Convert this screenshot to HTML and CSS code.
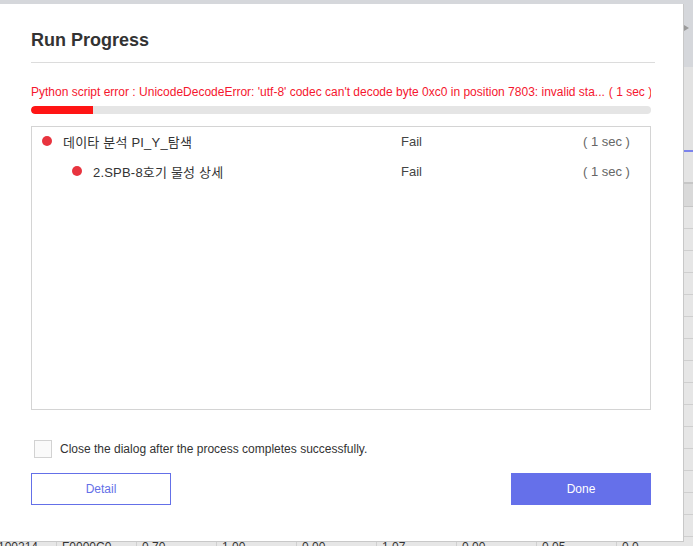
FILE: index.html
```html
<!DOCTYPE html>
<html>
<head>
<meta charset="utf-8">
<link rel="stylesheet" href="styles.css">
</head>
<body>
<div class="page">
  <div class="topbar"><span class="arrow"></span></div>
  <div class="tabbar"></div>
  <div class="gap"></div>
  <div class="thead"></div>
  <div class="tbody">
    <div class="trow"></div><div class="trow"></div><div class="trow"></div><div class="trow"></div>
    <div class="trow"></div><div class="trow"></div><div class="trow"></div><div class="trow"></div>
    <div class="trow"></div><div class="trow"></div><div class="trow"></div><div class="trow"></div>
    <div class="trow"></div><div class="trow"></div><div class="trow"></div>
    <div class="trow data">
      <span class="cell first">100214</span>
      <span class="cell">F0000C0</span>
      <span class="cell">0.70</span>
      <span class="cell">1.00</span>
      <span class="cell">0.00</span>
      <span class="cell">1.07</span>
      <span class="cell">0.00</span>
      <span class="cell">0.05</span>
      <span class="cell">0.0</span>
    </div>
  </div>
</div>

<div class="dialog">
  <h1 class="title">Run Progress</h1>
  <div class="divider"></div>
  <div class="error">Python script error : UnicodeDecodeError: 'utf-8' codec can't decode byte 0xc0 in position 7803: invalid sta...<span class="err-time">( 1 sec )</span></div>
  <div class="progress"><div class="progress-fill"></div></div>
  <div class="list">
    <div class="item">
      <div class="name"><span class="dot"></span>데이타 분석 PI_Y_탐색</div>
      <div class="status">Fail</div>
      <div class="time">( 1 sec )</div>
    </div>
    <div class="item child">
      <div class="name"><span class="dot"></span>2.SPB-8호기 물성 상세</div>
      <div class="status">Fail</div>
      <div class="time">( 1 sec )</div>
    </div>
  </div>
  <label class="check-row"><span class="checkbox"></span><span class="check-label">Close the dialog after the process completes successfully.</span></label>
  <div class="buttons">
    <button class="btn btn-outline">Detail</button>
    <button class="btn btn-primary">Done</button>
  </div>
</div>
</body>
</html>
```
FILE: styles.css
```css
* { box-sizing: border-box; }
html, body { margin: 0; padding: 0; }
body {
  width: 693px;
  height: 546px;
  overflow: hidden;
  position: relative;
  background: #e4e4e4;
  font-family: "Liberation Sans", Arial, "Noto Sans CJK KR", sans-serif;
}

/* background page */
.page { display: flex; flex-direction: column; }
.topbar {
  height: 67px;
  background: #d5d7db;
  position: relative;
}
.arrow {
  position: absolute;
  left: 684px;
  top: 25px;
  width: 0; height: 0;
  border-top: 3px solid transparent;
  border-bottom: 3px solid transparent;
  border-left: 5px solid #9a9a9a;
}
.tabbar {
  height: 85px;
  background: #e2e2e2;
  border-bottom: 2px solid #7b83ec;
}
.gap { height: 30px; background: #e4e4e4; }
.thead {
  height: 25px;
  background: #d9d9d9;
  border-top: 2px solid #c6c6c6;
  border-bottom: 1px solid #c6c6c6;
}
.tbody { display: flex; flex-direction: column; }
.trow {
  height: 22px;
  border-bottom: 1px solid #cfcfcf;
  background: #e6e6e6;
  display: flex;
}
.trow.data { border-top: 1px solid #cfcfcf; height: 23px; margin-top: -1px; }
.cell {
  width: 80px;
  flex: none;
  padding-left: 5px;
  font-size: 12px;
  line-height: 21px;
  color: #333;
  border-right: 1px solid #cfcfcf;
  white-space: nowrap;
  overflow: hidden;
}
.cell.first { width: 57px; padding-left: 0; text-indent: -2px; }

/* dialog */
.dialog {
  position: absolute;
  left: 0;
  top: 4px;
  width: 684px;
  height: 538px;
  background: #fff;
  border-right: 1px solid #c8c8c8;
  border-bottom: 1px solid #c8c8c8;
  padding: 24px 0 0 31px;
  display: flex;
  flex-direction: column;
}
.title {
  margin: 0;
  font-size: 18px;
  line-height: 24px;
  font-weight: bold;
  color: #333;
}
.divider {
  height: 1px;
  background: #dcdcdc;
  margin-top: 10px;
  width: 624px;
}
.error {
  margin-top: 21px;
  width: 620px;
  font-size: 12px;
  line-height: 16px;
  color: #f5162e;
  white-space: nowrap;
  overflow: hidden;
  display: flex;
  justify-content: space-between;
}
.err-time { margin-left: 4px; }
.progress {
  margin-top: 6px;
  width: 620px;
  height: 8px;
  border-radius: 4px;
  background: #e5e5e5;
  overflow: hidden;
}
.progress-fill {
  width: 10%;
  height: 100%;
  background: #ff1515;
  border-radius: 4px 0 0 4px;
}
.list {
  margin-top: 12px;
  width: 620px;
  height: 284px;
  border: 1px solid #d4d4d4;
  padding-top: 0;
}
.item {
  display: grid;
  grid-template-columns: 369px 182px auto;
  height: 30px;
  align-items: center;
  font-size: 13px;
  color: #333;
}
.item:first-child { margin-top: -1px; }
.name {
  display: flex;
  align-items: center;
  padding-left: 10px;
  white-space: nowrap;
  letter-spacing: 0.2px;
}
.child .name { padding-left: 40px; }
.dot {
  width: 10px;
  height: 10px;
  border-radius: 50%;
  background: #e8343f;
  margin-right: 11px;
  flex: none;
}
.status { color: #444; }
.time { color: #666; }

.check-row {
  margin-top: 30px;
  margin-left: 3px;
  display: flex;
  align-items: center;
  height: 18px;
}
.checkbox {
  width: 18px;
  height: 18px;
  border: 1px solid #d2d2d2;
  background: #fafafa;
  flex: none;
}
.check-label {
  margin-left: 8px;
  font-size: 12px;
  color: #333;
}
.buttons {
  margin-top: 15px;
  width: 620px;
  display: flex;
  justify-content: space-between;
}
.btn {
  width: 140px;
  height: 32px;
  font-family: "Liberation Sans", Arial, sans-serif;
  font-size: 12px;
  cursor: pointer;
  border-radius: 0;
}
.btn-outline {
  background: #fff;
  border: 1px solid #6470e8;
  color: #6470e8;
}
.btn-primary {
  background: #6570ea;
  border: 1px solid #6570ea;
  color: #fff;
}
```
